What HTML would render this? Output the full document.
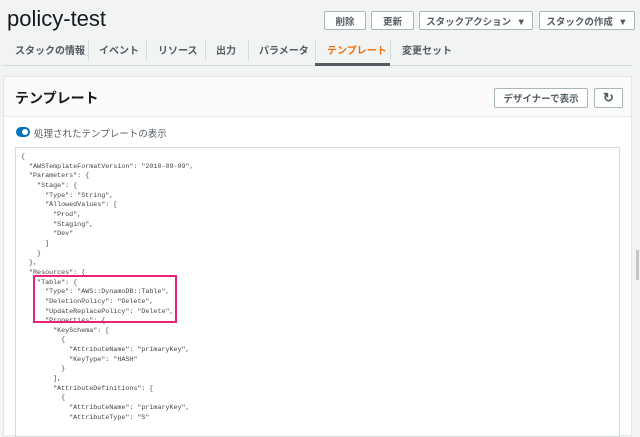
<!DOCTYPE html>
<html><head><meta charset="utf-8"><style>
*{margin:0;padding:0;box-sizing:border-box}
body{width:640px;height:423px;overflow:hidden;background:#f2f3f3;font-family:"Liberation Sans","Noto Sans CJK JP",sans-serif;color:#16191f;position:relative}
.abs{position:absolute}
.btn{position:absolute;top:11px;height:19px;border:1px solid #aab7b8;background:#fff;font-size:9.5px;color:#545b64;display:flex;align-items:center;justify-content:center;border-radius:2px;font-weight:bold}
.tab{position:absolute;top:42px;font-size:10px;color:#545b64;font-weight:bold}
.div{position:absolute;top:40px;width:1px;height:20px;background:#d5dbdb}
pre{position:absolute;left:21px;top:153px;font-family:"Liberation Mono",monospace;font-size:6.7px;line-height:9.65px;color:#444}
</style></head><body>
<div class="abs" style="left:7px;top:6px;font-size:22px;color:#16191f">policy-test</div>
<div class="btn" style="left:324px;width:42px">削除</div>
<div class="btn" style="left:371px;width:43px">更新</div>
<div class="btn" style="left:419px;width:114px">スタックアクション&nbsp;&nbsp;▼</div>
<div class="btn" style="left:539px;width:96px">スタックの作成&nbsp;&nbsp;▼</div>
<div class="tab" style="left:15px">スタックの情報</div>
<div class="div" style="left:88px"></div>
<div class="tab" style="left:99px">イベント</div>
<div class="div" style="left:146px"></div>
<div class="tab" style="left:158px">リソース</div>
<div class="div" style="left:205px"></div>
<div class="tab" style="left:216px">出力</div>
<div class="div" style="left:248px"></div>
<div class="tab" style="left:259px">パラメータ</div>
<div class="div" style="left:315px"></div>
<div class="tab" style="left:327px;color:#ec7211">テンプレート</div>
<div class="div" style="left:390px"></div>
<div class="tab" style="left:402px">変更セット</div>
<div class="abs" style="left:3px;top:65px;width:629px;height:1px;background:#d5dbdb"></div>
<div class="abs" style="left:315px;top:63px;width:75px;height:3px;background:#545b64"></div>
<div class="abs" style="left:3px;top:76px;width:629px;height:360px;background:#fff;border:1px solid #e4e7e7"></div>
<div class="abs" style="left:4px;top:77px;width:627px;height:40px;background:#fafafa;border-bottom:1px solid #eaeded"></div>
<div class="abs" style="left:15px;top:88px;font-size:14px;font-weight:bold">テンプレート</div>
<div class="btn" style="left:494px;top:88px;width:94px;height:20px">デザイナーで表示</div>
<div class="btn" style="left:594px;top:88px;width:29px;height:20px;font-size:13px">↻</div>
<div class="abs" style="left:16px;top:127px;width:14px;height:10px;border-radius:5px;background:#0073bb"></div>
<div class="abs" style="left:22px;top:129px;width:6px;height:6px;border-radius:3px;background:#fff"></div>
<div class="abs" style="left:34px;top:126px;font-size:9.5px;color:#545b64">処理されたテンプレートの表示</div>
<div class="abs" style="left:15px;top:147px;width:605px;height:290px;border:1px solid #d5dbdb;background:#fff"></div>
<div class="abs" style="left:636px;top:250px;width:3px;height:30px;background:#c8c8c8"></div>
<pre>{
  "AWSTemplateFormatVersion": "2010-09-09",
  "Parameters": {
    "Stage": {
      "Type": "String",
      "AllowedValues": [
        "Prod",
        "Staging",
        "Dev"
      ]
    }
  },
  "Resources": {
    "Table": {
      "Type": "AWS::DynamoDB::Table",
      "DeletionPolicy": "Delete",
      "UpdateReplacePolicy": "Delete",
      "Properties": {
        "KeySchema": [
          {
            "AttributeName": "primaryKey",
            "KeyType": "HASH"
          }
        ],
        "AttributeDefinitions": [
          {
            "AttributeName": "primaryKey",
            "AttributeType": "S"
</pre>
<div class="abs" style="left:33px;top:275px;width:144px;height:48px;border:2px solid #e8227a"></div>
</body></html>
